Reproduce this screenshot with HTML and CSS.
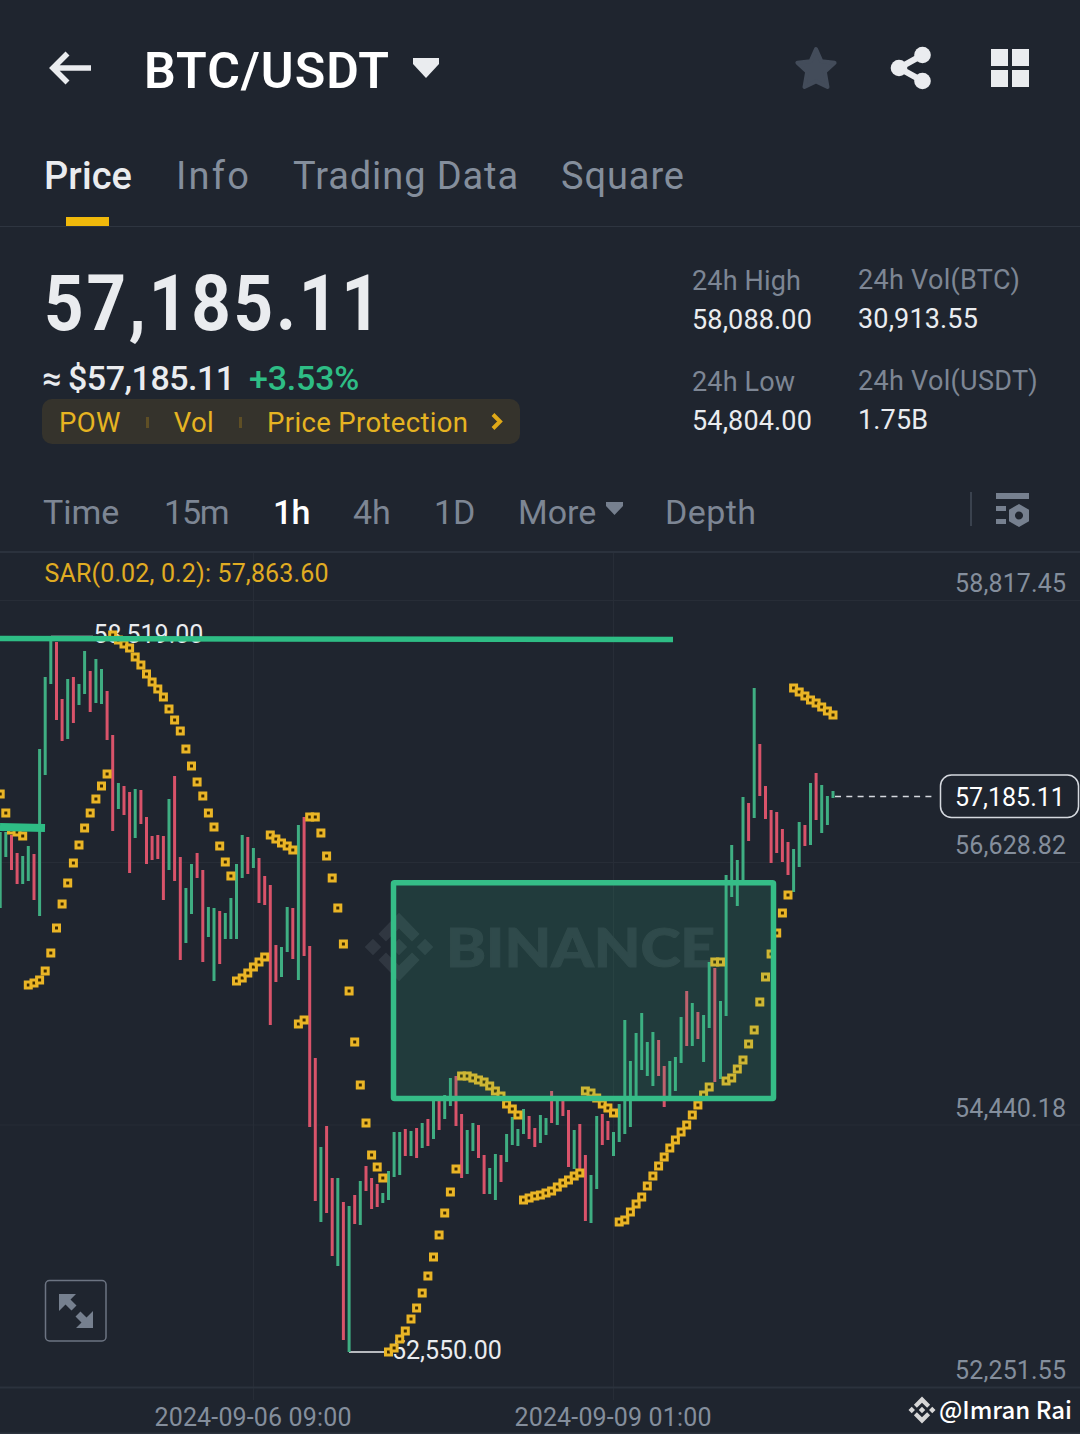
FILE: index.html
```html
<!DOCTYPE html>
<html lang="en">
<head>
  <meta charset="UTF-8">
  <meta name="viewport" content="width=device-width, initial-scale=1.0">
  <title>BTC/USDT</title>
  <link rel="stylesheet" href="styles.css">
</head>
<body>
  <header class="header">
    <svg class="back-icon" width="44" height="36" viewBox="0 0 44 36">
      <path d="M43 18H6M19.500 3.500L5 18l14.500 14.500" fill="none" stroke="#eaecef" stroke-width="5.6"/>
    </svg>
    <h1 class="pair">BTC/USDT</h1>
    <svg class="pair-arrow" width="26" height="20" viewBox="0 0 26 20">
      <path d="M0 0h26v6L13 20 0 6z" fill="#eaecef"/>
    </svg>
    <div class="header-icons">
      <svg width="44" height="44" viewBox="0 0 44 44">
        <path d="M22 3l5.4 12.2 13.2 1.5-9.8 9 2.7 15.3L22 35.500 10.500 41l2.700-15.300-9.800-9 13.200-1.500z" fill="#434c5a" stroke="#434c5a" stroke-width="4" stroke-linejoin="round"/>
      </svg>
      <svg class="share-icon" width="42" height="44" viewBox="0 0 42 44">
        <path d="M32.500 9L9 22l23.500 13" fill="none" stroke="#eaecef" stroke-width="6"/>
        <circle cx="32.500" cy="9" r="8.300" fill="#eaecef"/>
        <circle cx="9" cy="22" r="8.300" fill="#eaecef"/>
        <circle cx="32.500" cy="35" r="8.300" fill="#eaecef"/>
      </svg>
      <svg width="38" height="38" viewBox="0 0 38 38">
        <path d="M0 0h17v17H0zM21 0h17v17H21zM0 21h17v17H0zM21 21h17v17H21z" fill="#eaecef"/>
      </svg>
    </div>
  </header>

  <nav class="tabs">
    <a class="tab active">Price</a>
    <a class="tab info">Info</a>
    <a class="tab">Trading Data</a>
    <a class="tab">Square</a>
  </nav>

  <section class="summary">
    <div class="price-section">
      <div class="price">57,185.11</div>
      <div class="fiat"><span class="approx">≈</span><span class="usd">$57,185.11</span><span class="change">+3.53%</span></div>
      <div class="tags">
        <span>POW</span>
        <i class="tag-line"></i>
        <span>Vol</span>
        <i class="tag-line"></i>
        <span>Price Protection</span>
        <svg class="tag-arrow" width="12" height="17" viewBox="0 0 12 17">
          <path d="M2 1.500l7 7-7 7" fill="none" stroke="#e0a918" stroke-width="4"/>
        </svg>
      </div>
    </div>
    <div class="stats">
      <div class="stats-column">
        <div class="stat"><p>24h High</p><b>58,088.00</b></div>
        <div class="stat"><p>24h Low</p><b>54,804.00</b></div>
      </div>
      <div class="stats-column volume">
        <div class="stat"><p>24h Vol(BTC)</p><b>30,913.55</b></div>
        <div class="stat"><p>24h Vol(USDT)</p><b>1.75B</b></div>
      </div>
    </div>
  </section>

  <nav class="intervals">
    <span>Time</span>
    <span class="minutes">15m</span>
    <span class="active">1h</span>
    <span>4h</span>
    <span>1D</span>
    <span class="more">More
      <svg width="17" height="13" viewBox="0 0 17 13"><path d="M0 0h17v4L8.500 13 0 4z" fill="#76808f"/></svg>
    </span>
    <span class="depth">Depth</span>
    <i class="interval-line"></i>
    <svg class="settings-icon" width="34" height="34" viewBox="0 0 34 34">
      <path d="M0 0h33v6H0zM0 13h10v5H0zM0 26h10v5H0z" fill="#76808f"/>
      <path fill-rule="evenodd" d="M23 11l10 5.700v11.600L23 34l-10-5.700V16.700zM23 18.500a4 4 0 1 0 .01 0z" fill="#76808f"/>
    </svg>
  </nav>

  <main class="chart">
    <svg id="chart" width="1080" height="883" viewBox="0 551 1080 883">
      <g class="grid">
        <path d="M0 600.500H1080M0 862.500H1080M0 1125H1080M253.500 553V1400M613.500 553V1400"/>
      </g>
      <path class="frame" d="M0 552H1080M0 1387.500H1080M0 1433.500H1080"/>

      <g class="watermark">
        <path transform="translate(399 947) scale(1.370)" d="M-15-9.500L0-25 15-9.500 9.500-4 0-13.500-9.500-4zM-15 9.500L0 25 15 9.500 9.500 4 0 13.500-9.500 4zM0-6L6 0 0 6-6 0zM-19-6L-13 0-19 6-25 0zM19-6L25 0 19 6 13 0z"/>
        <text x="446" y="967" textLength="269" lengthAdjust="spacingAndGlyphs">BINANCE</text>
      </g>

      <path d="M51 636.500H93M349 1352H390" stroke="#eaecef" stroke-width="1.500"/>
      <text class="peak" x="93.500" y="643">58,519.00</text>
      <text class="peak" x="392" y="1359">52,550.00</text>

      <g id="bars"></g>
      <g id="sar"></g>

      <!-- drawings on top of the candles -->
      <path d="M0 638.500L673 639.500" stroke="#2ebd85" stroke-width="5.500"/>
      <path d="M0 827L45 828" stroke="#2ebd85" stroke-width="8"/>
      <rect class="zone" x="393.500" y="882.800" width="380" height="215.600" rx="1"/>

      <path d="M835 796.500H932" stroke="#d5d9df" stroke-width="1.500" stroke-dasharray="6 5.300"/>
      <rect x="940.500" y="775" width="138" height="42.500" rx="11" fill="#1f252f" stroke="#d5d9df" stroke-width="1.500"/>

      <text class="sar-label" x="44.500" y="582" textLength="284">SAR(0.02, 0.2): 57,863.60</text>
      <g class="axis">
        <text x="955" y="592" textLength="111">58,817.45</text>
        <text class="current" x="955" y="806">57,185.11</text>
        <text x="955" y="854" textLength="111">56,628.82</text>
        <text x="955" y="1117" textLength="111">54,440.18</text>
        <text x="955" y="1379" textLength="111">52,251.55</text>
        <text x="154.500" y="1426" textLength="197">2024-09-06 09:00</text>
        <text x="514.500" y="1426" textLength="197">2024-09-09 01:00</text>
      </g>

      <g class="fullscreen">
        <rect x="45.500" y="1280.500" width="60.500" height="60.500" rx="4"/>
        <path d="M59 1294h17l-5.500 5.500 6 6-5 5-6-6-6.500 6.500zM93 1328H76l5.500-5.500-6-6 5-5 6 6 6.500-6.500z"/>
      </g>

      <g class="author">
        <path transform="translate(922 1410) scale(.54)" d="M-15-9.500L0-25 15-9.500 9.500-4 0-13.500-9.500-4zM-15 9.500L0 25 15 9.500 9.500 4 0 13.500-9.500 4zM0-6L6 0 0 6-6 0zM-19-6L-13 0-19 6-25 0zM19-6L25 0 19 6 13 0z"/>
        <text x="939" y="1419" textLength="133">@Imran Rai</text>
      </g>
    </svg>
  </main>

  <script src="chart.js"></script>
</body>
</html>
```

FILE: styles.css
```css
body, html {
  margin: 0;
  padding: 0;
  background-color: #1f252f;
  font-family: Roboto, "Noto Sans", sans-serif;
  color: #eaecef;
}

body {
  width: 1080px;
  height: 1434px;
  overflow: hidden;
}

svg {
  display: block;
  flex-shrink: 0;
}

.header {
  display: flex;
  align-items: center;
  height: 136px;
  padding: 0 51px 0 48px;
}

.pair {
  flex-shrink: 0;
  width: 312px;
  margin: 0 9px 0 0;
  padding: 6px 0 0 52px;
  box-sizing: border-box;
  font-size: 50px;
  line-height: 60px;
  font-weight: 600;
  letter-spacing: 1px;
  color: #fff;
}

.header-icons {
  display: flex;
  align-items: center;
  margin-left: auto;
  gap: 0 56px;
}

.share-icon {
  margin: 0 3px 0 -4px;
}

.tabs {
  display: grid;
  grid-template-columns: 132px 117px 268px 200px;
  height: 90px;
  padding-left: 44px;
  border-bottom: 1px solid #2e3540;
}

.tab {
  position: relative;
  justify-self: start;
  font-size: 38px;
  line-height: 81px;
  letter-spacing: 0.9px;
  color: #848e9c;
}

.tab.info {
  letter-spacing: 2.2px;
}

.tab.active {
  color: #eaecef;
  font-weight: 500;
  letter-spacing: 0.1px;
}

.tab.active::after {
  content: "";
  position: absolute;
  left: 22px;
  bottom: 0;
  width: 43px;
  height: 9px;
  background-color: #f0b90b;
}

.summary {
  display: flex;
  justify-content: space-between;
  height: 245px;
  padding: 0 0 0 42px;
}

.price-section {
  padding-top: 37px;
}

.price {
  margin-left: 2px;
  font-size: 78px;
  line-height: 80px;
  font-weight: 700;
  letter-spacing: 3.2px;
  transform: scaleX(0.885);
  transform-origin: left;
}

.fiat {
  display: flex;
  margin-top: 13px;
  font-size: 34px;
  line-height: 42px;
  font-weight: 500;
}

.approx {
  width: 26px;
}

.usd {
  width: 181px;
  letter-spacing: -0.5px;
}

.change {
  color: #2ebd85;
  letter-spacing: -0.2px;
}

.tags {
  display: flex;
  align-items: center;
  width: 478px;
  height: 45px;
  padding: 2px 17px 0;
  box-sizing: border-box;
  border-radius: 10px;
  background-color: #35332c;
  color: #e6b422;
  font-size: 27.5px;
  letter-spacing: 0.35px;
}

.tag-line {
  width: 3px;
  height: 11px;
  margin: 0 25px;
  background-color: #5f4f25;
}

.tag-arrow {
  margin-left: auto;
  margin-top: -2px;
}

.stats {
  display: flex;
  width: 388px;
  padding-top: 35px;
}

.stats-column {
  width: 166px;
  display: flex;
  flex-direction: column;
  gap: 23px;
}

.stats-column.volume {
  width: 222px;
  margin-top: -1px;
}

.stat p, .stat b {
  display: block;
  margin: 0;
  font-size: 27px;
  line-height: 39px;
  letter-spacing: 0.15px;
  white-space: nowrap;
}

.stat p {
  color: #7d8694;
  font-weight: 400;
}

.volume .stat p {
  letter-spacing: 0.3px;
}

.stat b {
  font-weight: 400;
}

.intervals {
  display: grid;
  grid-template-columns: 121px 109px 80px 81px 84px 147px 304px 26px auto;
  align-items: center;
  height: 79px;
  padding-left: 43px;
  font-size: 34px;
  font-weight: 400;
  color: #7d8694;
}

.intervals .minutes {
  letter-spacing: -1.2px;
}

.intervals .depth {
  letter-spacing: 0.4px;
}

.intervals .active {
  color: #fff;
  font-weight: 500;
  letter-spacing: -0.8px;
}

.intervals .more {
  display: flex;
  align-items: center;
  gap: 10px;
}

.more svg {
  margin-top: -6px;
}

.interval-line {
  width: 2px;
  height: 34px;
  margin-top: -6px;
  margin-left: 1px;
  background-color: #3a424e;
}

.settings-icon {
  margin-top: -4px;
  margin-left: 1px;
}

.grid path {
  stroke: #272d37;
  stroke-width: 1;
}

.frame {
  stroke: #2b323d;
  stroke-width: 2;
}

.chart text {
  font-size: 25px;
}

.watermark {
  fill: #303741;
}

.chart .watermark text {
  font-family: Lato, sans-serif;
  font-size: 54px;
  font-weight: 900;
  stroke: #303741;
  stroke-width: 1;
}

.peak {
  fill: #eaecef;
}

.bar-up {
  stroke: #3fae82;
  stroke-width: 3;
}

.bar-down {
  stroke: #d9536a;
  stroke-width: 3;
}

.dot {
  fill: #3a2800;
  stroke: #eab526;
  stroke-width: 3;
}

.zone {
  fill: rgba(46, 189, 133, 0.15);
  stroke: #35bd87;
  stroke-width: 5.5;
}

.sar-label {
  fill: #e0ac22;
}

.axis {
  fill: #848e9c;
}

.axis .current {
  fill: #fff;
}

.fullscreen rect {
  fill: none;
  stroke: #6c7482;
  stroke-width: 1.5;
}

.fullscreen path {
  fill: #76808f;
}

.author path {
  fill: #d6d6d6;
}

.chart .author text {
  fill: #fff;
  font-family: "Noto Sans CJK SC", "Noto Sans", sans-serif;
  font-size: 24px;
  font-weight: 500;
}
```

FILE: chart.js
```js
// one entry per hour: direction (u/d), top, bottom
const bars = `u832-908 u832-857 d835-870 d853-884 u856-884 u846-881 d854-900 u749-916 u677-775 u636-684
d642-720 d699-741 u679-739 d677-723 u684-705 u651-694 d671-712 u659-703 u669-704 d691-740
d735-831 u783-809 d786-815 d792-873 u789-838 d790-824 d817-864 d836-860 d835-859 d836-900
u799-870 d776-881 d857-960 u888-943 u864-914 d853-878 d870-962 u907-937 u908-981 d911-964
u913-939 u898-939 u864-939 u835-878 d837-874 u848-868 d858-903 d876-905 d885-1025 d945-982
u947-977 u907-952 d908-959 u825-980 d817-956 d946-1127 d1058-1201 u1147-1222 d1126-1213 d1178-1256
u1178-1266 d1202-1340 u1206-1352 d1195-1224 u1181-1225 d1166-1191 d1178-1209 d1184-1207 u1193-1203 u1171-1200
u1132-1177 u1132-1175 d1129-1156 u1131-1156 d1128-1158 u1123-1148 d1119-1146 u1098-1139 d1098-1130 u1095-1119
u1078-1106 d1076-1126 d1114-1178 u1130-1174 u1123-1151 d1125-1158 d1155-1194 u1168-1194 u1154-1200 d1155-1182
u1134-1162 u1117-1145 u1129-1146 u1109-1134 d1116-1139 d1128-1147 u1115-1143 u1118-1135 d1091-1123 u1100-1125
d1101-1116 d1110-1167 u1130-1169 d1124-1170 d1155-1221 u1175-1223 u1116-1189 d1114-1145 d1121-1140 u1132-1156
u1104-1142 u1020-1134 u1061-1127 u1033-1097 u1013-1070 u1042-1076 u1032-1086 d1040-1076 d1066-1107 u1061-1097
u1057-1091 u1017-1063 d991-1046 u1003-1046 d1012-1039 u1015-1062 u962-1028 d968-1082 u1001-1079 u875-1016
u845-897 u860-906 u797-880 d803-841 u688-818 d744-796 d786-819 d810-863 d812-853 d829-862
d842-875 u849-892 u822-867 d825-846 u783-845 d773-820 u785-833 u796-825 u791-798`.split(/\s+/);

const sar = [
  794, 813, 830, 832, 836, 985, 983, 980, 971, 953, 928, 904, 883, 863, 845, 828, 813, 799, 786, 774,
  635, 640, 644, 648, 657, 665, 674, 682, 689, 697, 709, 720, 731, 749, 766, 782, 796, 813, 827, 846,
  862, 876, 981, 978, 973, 967, 962, 957, 835, 839, 843, 846, 850, 1024, 1020, 817, 817, 833, 856, 878,
  908, 944, 991, 1042, 1085, 1123, 1155, 1167, 1178, 1352, 1348, 1339, 1331, 1319, 1308, 1293, 1276, 1257, 1235, 1213,
  1192, 1169, 1076, 1076, 1078, 1080, 1082, 1086, 1091, 1096, 1104, 1109, 1115, 1200, 1198, 1196, 1195, 1193, 1191, 1187,
  1183, 1180, 1176, 1173, 1091, 1093, 1098, 1104, 1108, 1113, 1222, 1220, 1212, 1204, 1197, 1186, 1176, 1166, 1157, 1148,
  1140, 1132, 1125, 1115, 1105, 1095, 1087, 962, 962, 1081, 1078, 1069, 1060, 1044, 1030, 1002, 977, 954, 933, 913,
  895, 688, 692, 696, 700, 703, 707, 711, 715
];

const step = 5.627;
const xAt = (i) => (0.2 + i * step).toFixed(1);

document.getElementById('bars').innerHTML = bars.map((bar, i) => {
  const [top, bottom] = bar.slice(1).split('-');
  const type = bar[0] === 'u' ? 'bar-up' : 'bar-down';
  return `<line class="${type}" x1="${xAt(i)}" x2="${xAt(i)}" y1="${top}" y2="${bottom}"/>`;
}).join('');

document.getElementById('sar').innerHTML = sar.map((y, i) =>
  `<rect class="dot" x="${xAt(i) - 3}" y="${y - 3}" width="6" height="6"/>`
).join('');
```
